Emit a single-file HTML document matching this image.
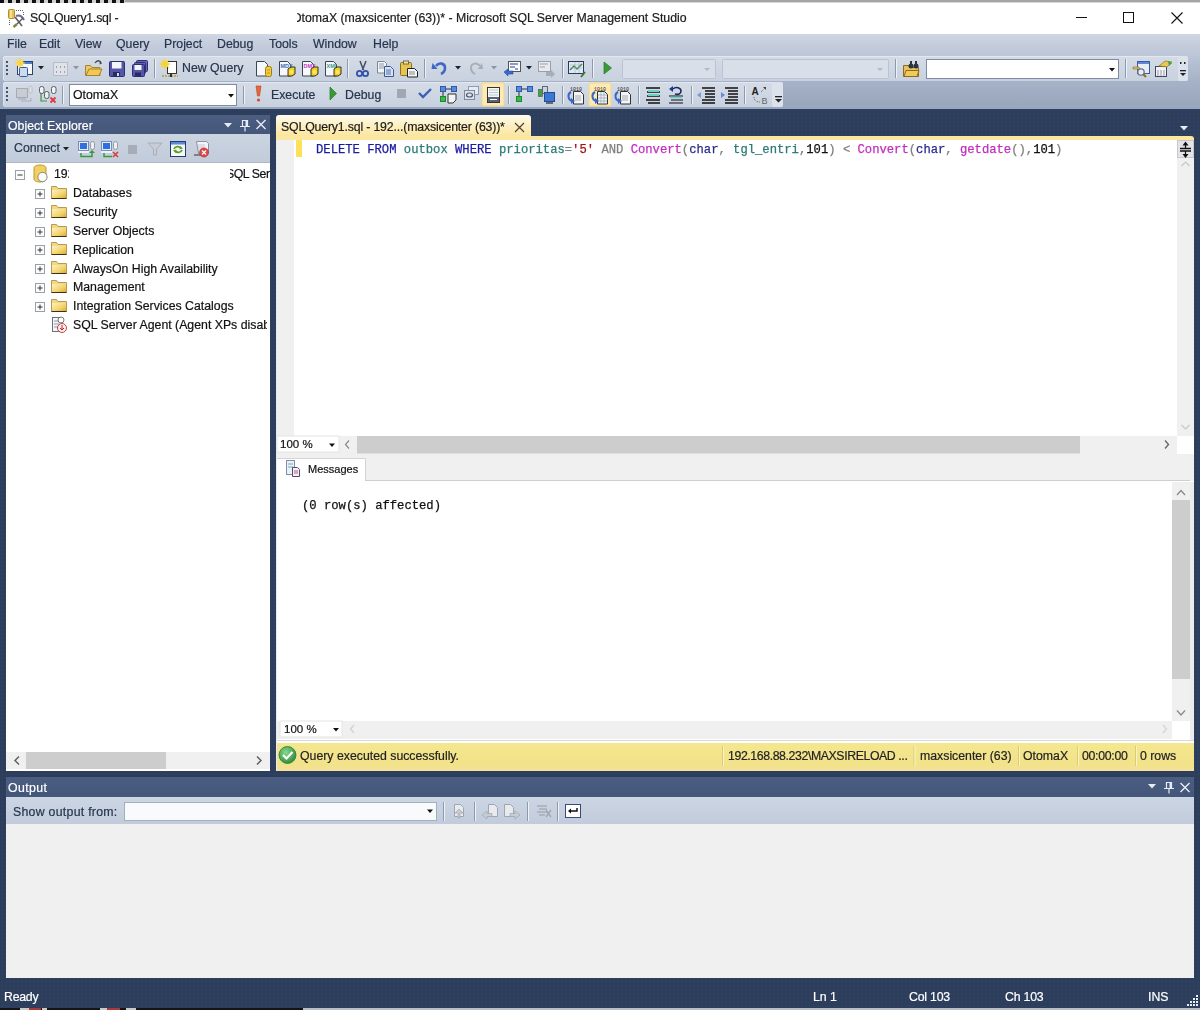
<!DOCTYPE html>
<html><head><meta charset="utf-8">
<style>
*{box-sizing:border-box;margin:0;padding:0}
html,body{width:1200px;height:1010px;overflow:hidden}
body{position:relative;background:#2d3e5c radial-gradient(circle,#31446400 0,#314464 0.6px,transparent 0.9px) 0 0/4px 4px;font-family:"Liberation Sans",sans-serif;font-size:12px;color:#000}
.a{position:absolute;display:block}
.t{position:absolute;white-space:nowrap;line-height:1;-webkit-text-stroke:0.2px;will-change:transform}
.m{font-family:"Liberation Mono",monospace}
</style></head><body>

<div class="a" style="left:0px;top:0px;width:1200px;height:3px;background:linear-gradient(#a4a4a4 0,#a4a4a4 2px,#d8d8d8 2px)"></div>
<div class="a" style="left:0px;top:0px;width:125px;height:3px;background:repeating-linear-gradient(90deg,#111 0,#111 4px,#cfcfcf 4px,#cfcfcf 8px)"></div>
<div class="a" style="left:0px;top:3px;width:1200px;height:31px;background:#fff"></div>
<svg class="a" style="left:4px;top:5px;" width="26" height="26" viewBox="0 0 26 26"><rect x="4.5" y="4.5" width="6" height="9" rx="1" fill="#e8c050" stroke="#a08430" stroke-width="0.9"/><rect x="6" y="5" width="2" height="8" fill="#f8e08a"/><path d="M12 5.5h8M19.5 7v4M5.5 15v6" stroke="#555" stroke-width="0.9" stroke-dasharray="1 1"/><path d="M12 11c3-1 6 0 8 4" stroke="#6a6a90" stroke-width="2" fill="none"/><path d="M11 12l7 9" stroke="#5a5a6a" stroke-width="1.6"/><path d="M19 13l-6 6" stroke="#555" stroke-width="1.2"/><path d="M13 19l-3.5 3" stroke="#7a8a3a" stroke-width="2.4"/></svg>
<div class="t" id="title1" style="left:30px;top:12px;font-size:12.3px;color:#1a1a1a;letter-spacing:-0.22px">SQLQuery1.sql -</div>
<div class="t" id="title2" style="left:291.5px;top:12px;font-size:12.3px;color:#1a1a1a;clip-path:inset(-3px -3px -3px 5.5px)">OtomaX (maxsicenter (63))* - Microsoft SQL Server Management Studio</div>
<div class="a" style="left:1076px;top:17px;width:11px;height:1px;background:#111"></div>
<div class="a" style="left:1123px;top:12px;width:11px;height:11px;border:1px solid #111"></div>
<svg class="a" style="left:1171px;top:12px;" width="12" height="12" viewBox="0 0 12 12"><path d="M0.5 0.5L11.5 11.5M11.5 0.5L0.5 11.5" stroke="#111" stroke-width="1.1"/></svg>
<div class="a" style="left:0px;top:34px;width:1200px;height:22px;background:linear-gradient(#d0d7e4,#c6cedd 40%,#bcc6d7)"></div>
<div class="a" style="left:0px;top:56px;width:1200px;height:53px;background:linear-gradient(#bac5d6,#a4b1c6 50%,#98a6bd)"></div>
<div class="t" style="left:7px;top:38px;font-size:12.3px;color:#26344d">File</div>
<div class="t" style="left:39px;top:38px;font-size:12.3px;color:#26344d">Edit</div>
<div class="t" style="left:75px;top:38px;font-size:12.3px;color:#26344d">View</div>
<div class="t" style="left:116px;top:38px;font-size:12.3px;color:#26344d">Query</div>
<div class="t" style="left:164px;top:38px;font-size:12.3px;color:#26344d">Project</div>
<div class="t" style="left:217px;top:38px;font-size:12.3px;color:#26344d">Debug</div>
<div class="t" style="left:269px;top:38px;font-size:12.3px;color:#26344d">Tools</div>
<div class="t" style="left:313px;top:38px;font-size:12.3px;color:#26344d">Window</div>
<div class="t" style="left:373px;top:38px;font-size:12.3px;color:#26344d">Help</div>
<div class="a" style="left:3px;top:56px;width:1185px;height:25px;background:linear-gradient(#d5dce7,#c8d1df);border-radius:3px;box-shadow:inset 0 1px 0 #e3e8ef,inset 1px 0 0 #dfe5ed"></div>
<div class="a" style="left:3px;top:82px;width:780px;height:25px;background:linear-gradient(#d5dce7,#c8d1df);border-radius:3px;box-shadow:inset 0 1px 0 #e3e8ef,inset 1px 0 0 #dfe5ed"></div>
<div class="a" style="left:6px;top:115px;width:264px;height:19px;background:linear-gradient(#4b5e81,#44567a)"></div>
<div class="t" id="oe" style="left:8px;top:120px;font-size:12.3px;color:#fff">Object Explorer</div>
<div class="a" style="left:6px;top:134px;width:264px;height:28px;background:linear-gradient(#cbd4e1,#c1cbda)"></div>
<div class="t" id="connect" style="left:14px;top:142px;font-size:12.3px;color:#26344d">Connect</div>
<div class="a" style="left:6px;top:162px;width:264px;height:609px;background:#fff;border-top:1px solid #b0b8c4"></div>
<div class="a" style="left:276px;top:115px;width:255px;height:22px;background:linear-gradient(#fffcee 0%,#fdf0c4 45%,#fbe49c 100%);border-radius:3px 3px 0 0"></div>
<div class="t" id="tab" style="left:281px;top:121px;font-size:12.3px;color:#1a1a1a;letter-spacing:-0.16px">SQLQuery1.sql - 192...(maxsicenter (63))*</div>
<div class="a" style="left:276px;top:136px;width:918px;height:4px;background:#fce7a0;border-radius:0 3px 0 0"></div>
<div class="a" style="left:276px;top:140px;width:918px;height:631px;background:#fff;border-left:1px solid #e6ecf4"></div>
<div class="a" style="left:6px;top:777px;width:1188px;height:20px;background:linear-gradient(#4b5e81,#44567a)"></div>
<div class="t" id="output" style="left:8px;top:782px;font-size:12.3px;color:#fff;letter-spacing:0.4px">Output</div>
<div class="a" style="left:6px;top:797px;width:1188px;height:27px;background:linear-gradient(#cdd6e3,#c1cbdb)"></div>
<div class="t" id="showout" style="left:13px;top:806px;font-size:12.3px;color:#26344d;letter-spacing:0.28px">Show output from:</div>
<div class="a" style="left:6px;top:824px;width:1188px;height:154px;background:#f0f0f0"></div>
<div class="t" id="ready" style="left:4px;top:991px;font-size:12.3px;color:#fff;letter-spacing:-0.25px">Ready</div>
<div class="t" id="ln" style="left:813px;top:991px;font-size:12.3px;color:#fff">Ln 1</div>
<div class="t" id="col" style="left:909px;top:991px;font-size:12.3px;color:#fff;letter-spacing:-0.2px">Col 103</div>
<div class="t" id="ch" style="left:1005px;top:991px;font-size:12.3px;color:#fff;letter-spacing:-0.2px">Ch 103</div>
<div class="t" id="ins" style="left:1148px;top:991px;font-size:12.3px;color:#fff">INS</div>
<div class="a" style="left:0px;top:1008px;width:1200px;height:2px;background:#141414"></div>
<div class="a" style="left:303px;top:1008px;width:897px;height:2px;background:#b9bec6"></div>
<div class="a" style="left:20px;top:1008px;width:9px;height:2px;background:#c9c9c9"></div>
<div class="a" style="left:29px;top:1008px;width:12px;height:2px;background:#a83a3a"></div>
<div class="a" style="left:42px;top:1008px;width:5px;height:2px;background:#c9c9c9"></div>
<div class="a" style="left:100px;top:1008px;width:7px;height:2px;background:#c9c9c9"></div>
<div class="a" style="left:107px;top:1008px;width:13px;height:2px;background:#a83a3a"></div>
<div class="a" style="left:126px;top:1008px;width:10px;height:2px;background:#c9c9c9"></div>
<svg class="a" style="left:1187px;top:995px;" width="12" height="12" viewBox="0 0 12 12"><rect x="9" y="0" width="2" height="2" fill="#e8ecf4"/><rect x="6" y="3" width="2" height="2" fill="#e8ecf4"/><rect x="9" y="3" width="2" height="2" fill="#e8ecf4"/><rect x="3" y="6" width="2" height="2" fill="#e8ecf4"/><rect x="6" y="6" width="2" height="2" fill="#e8ecf4"/><rect x="9" y="6" width="2" height="2" fill="#e8ecf4"/><rect x="0" y="9" width="2" height="2" fill="#e8ecf4"/><rect x="3" y="9" width="2" height="2" fill="#e8ecf4"/><rect x="6" y="9" width="2" height="2" fill="#e8ecf4"/><rect x="9" y="9" width="2" height="2" fill="#e8ecf4"/></svg>
<svg class="a" style="left:0px;top:56px;" width="1200" height="52" viewBox="0 0 1200 52"><g transform="translate(0,-56)"><rect x="6" y="61" width="2" height="2" fill="#44536d"/><rect x="6" y="65" width="2" height="2" fill="#44536d"/><rect x="6" y="69" width="2" height="2" fill="#44536d"/><rect x="6" y="73" width="2" height="2" fill="#44536d"/><rect x="17.5" y="61.5" width="15" height="13" fill="#f4f7fc" stroke="#2c4270"/><rect x="18" y="62" width="14" height="2" fill="#4d7fd0"/><circle cx="20" cy="63" r="3.5" fill="#f8e060"/><path d="M20 58v10M15 63h10M16.5 59.5l7 7M23.5 59.5l-7 7" stroke="#f3d23c" stroke-width="1"/><rect x="19.5" y="67.5" width="8" height="9" rx="1" fill="#c9dcf2" stroke="#3a5a90"/><path d="M38 66h6l-3 3.5z" fill="#1b2230"/><rect x="53.5" y="62.5" width="14" height="13" fill="#dfe3e8" stroke="#b8bec8"/><path d="M56 67h1M60 67h1M64 67h1M56 72h1M60 72h1M64 72h1" stroke="#8a8f99" stroke-width="1.5"/><path d="M73 66h6l-3 3.5z" fill="#8d96a6"/><path d="M85.5 65.5h5l1.5 2h8v8h-14.5z" fill="#e9c96a" stroke="#a9822c"/><path d="M86 75.5l3-6.5h13l-3 6.5z" fill="#f2c754" stroke="#a9822c"/><path d="M95 63c2-3 5-3 6 0" stroke="#3c4a5e" stroke-width="1.3" fill="none"/><path d="M100 61l2 2.5-2.5 1z" fill="#3c4a5e"/><rect x="109.5" y="61.5" width="15" height="15" rx="1" fill="#5656a9" stroke="#2e2e78"/><rect x="112" y="62" width="9.5" height="6.5" fill="#f4f4fa"/><rect x="113" y="72" width="7" height="4.5" fill="#2a2a60"/><rect x="117" y="73" width="2" height="3" fill="#d8d8ee"/><rect x="136.5" y="60.5" width="11" height="11" rx="1" fill="#6767b3" stroke="#2e2e78"/><rect x="134.5" y="62.5" width="11" height="11" rx="1" fill="#6060ae" stroke="#2e2e78"/><rect x="132.5" y="64.5" width="12" height="12" rx="1" fill="#5656a9" stroke="#2e2e78"/><rect x="134.5" y="65" width="7" height="5" fill="#f4f4fa"/><rect x="135" y="72.5" width="6" height="3.5" fill="#2a2a60"/><rect x="154" y="59" width="1" height="19" fill="#8c99ae"/><rect x="155" y="59" width="1" height="19" fill="#eef2f7"/><rect x="167.5" y="61.5" width="9" height="12" fill="#fff" stroke="#333"/><circle cx="165" cy="64" r="3.8" fill="#f6d846"/><path d="M165 58.5v11M159.5 64h11M161 60l8 8M169 60l-8 8" stroke="#f1cf3a" stroke-width="0.9"/><path d="M162 76h16" stroke="#b89a30" stroke-width="1.5" stroke-dasharray="2 1"/><rect x="170" y="74" width="2" height="3" fill="#333"/><path d="M256.5 61.5h8l3 3v11.5h-11z" fill="#f7f8fb" stroke="#3c4450"/><rect x="265.5" y="66.5" width="6" height="10" rx="2" fill="#f1cc3e" stroke="#9c7b18"/><path d="M267 70h3M267 73h3" stroke="#c89a18"/><path d="M279.5 61.5h8l3 3v11.5h-11z" fill="#f7f8fb" stroke="#3c4450"/><text x="280.5" y="68" font-family="Liberation Sans" font-size="5.5" font-weight="bold" fill="#3a70b8">MDX</text><path d="M288 69l3-2h4v7l-3 2h-4z" fill="#f4d21c" stroke="#222" stroke-width="0.9"/><circle cx="291.5" cy="72" r="2" fill="#fbe766"/><path d="M302.5 61.5h8l3 3v11.5h-11z" fill="#f7f8fb" stroke="#3c4450"/><text x="303.5" y="68" font-family="Liberation Sans" font-size="5.5" font-weight="bold" fill="#c438c4">DMX</text><path d="M311 69l3-2h4v7l-3 2h-4z" fill="#f4d21c" stroke="#222" stroke-width="0.9"/><circle cx="314.5" cy="72" r="2" fill="#fbe766"/><path d="M325.5 61.5h8l3 3v11.5h-11z" fill="#f7f8fb" stroke="#3c4450"/><text x="326.5" y="68" font-family="Liberation Sans" font-size="5.5" font-weight="bold" fill="#3a9a8a">XML</text><path d="M334 69l3-2h4v7l-3 2h-4z" fill="#f4d21c" stroke="#222" stroke-width="0.9"/><circle cx="337.5" cy="72" r="2" fill="#fbe766"/><rect x="347" y="59" width="1" height="19" fill="#8c99ae"/><rect x="348" y="59" width="1" height="19" fill="#eef2f7"/><path d="M360 61l3.5 9M366 61l-3.5 9" stroke="#444c66" stroke-width="1.5"/><circle cx="359.5" cy="73.5" r="2.6" fill="none" stroke="#3450a8" stroke-width="1.8"/><circle cx="365.5" cy="73.5" r="2.6" fill="none" stroke="#3450a8" stroke-width="1.8"/><path d="M377.5 61.5h7l2 2v9.5h-9z" fill="#f3f4f8" stroke="#7d8799"/><path d="M379 64h5M379 66h5M379 68h5" stroke="#8f99aa"/><path d="M384.5 66.5h6l3 3v7h-9z" fill="#d6e3f5" stroke="#3f5891"/><path d="M386 70h5M386 72h5M386 74h5" stroke="#5470a8"/><rect x="400.5" y="62.5" width="11" height="13" rx="1" fill="#e5c450" stroke="#8e7020"/><rect x="403.5" y="61" width="5" height="3" fill="#e9e3c2" stroke="#7a6a3a"/><path d="M407.5 68.5h7l3 3v5.5h-10z" fill="#f5f6f9" stroke="#222"/><path d="M409 72h6M409 74h6" stroke="#888"/><rect x="424" y="59" width="1" height="19" fill="#8c99ae"/><rect x="425" y="59" width="1" height="19" fill="#eef2f7"/><path d="M436 66c3-4 9-3 9 2c0 3-2 5-4 6" stroke="#3d68c4" stroke-width="2.6" fill="none"/><path d="M432.5 63l5 6h-6z" fill="#3d68c4"/><path d="M455 66h6l-3 3.5z" fill="#1b2230"/><path d="M480 66c-3-4-9-3-9 2c0 3 2 5 4 6" stroke="#a8adb6" stroke-width="2" fill="none"/><path d="M482 63l-4 6h5z" fill="#a8adb6"/><path d="M491 66h6l-3 3.5z" fill="#8d96a6"/><rect x="508.5" y="61.5" width="12" height="10" fill="#fafbfd" stroke="#555"/><path d="M510 64h8M510 67h5M515 69h3" stroke="#2a3a8a" stroke-width="1.2"/><path d="M504 72l4-3v2h5v3h-5v2z" fill="#3a6ad0" stroke="#1e4aa0" stroke-width="0.6"/><path d="M526 66h6l-3 3.5z" fill="#1b2230"/><rect x="538.5" y="61.5" width="12" height="10" fill="#e8eaee" stroke="#9aa0aa"/><path d="M540 64h8M540 67h5" stroke="#9aa0aa"/><path d="M546 72h5v-2l4 4-4 4v-2h-5z" fill="#a8adb6"/><rect x="562" y="59" width="1" height="19" fill="#8c99ae"/><rect x="563" y="59" width="1" height="19" fill="#eef2f7"/><rect x="568.5" y="61.5" width="15" height="12" fill="#dfe8f6" stroke="#2c3a5a"/><path d="M570 70l4-4 3 3 5-5" stroke="#3a8a3a" stroke-width="1.5" fill="none"/><path d="M570 65h12M570 68h12M575 62v11M579 62v11" stroke="#9ab" stroke-width="0.5"/><path d="M581 77l4-5" stroke="#3a7a2a" stroke-width="2"/><rect x="592" y="59" width="1" height="19" fill="#8c99ae"/><rect x="593" y="59" width="1" height="19" fill="#eef2f7"/><path d="M604 62l7.5 6-7.5 6z" fill="#3a9a3a" stroke="#257a25" stroke-width="0.7"/><rect x="622.5" y="59.5" width="93" height="19" rx="1" fill="#d9dfe8" stroke="#b9c3d2"/><path d="M704 68h6l-3 3z" fill="#b0b8c4"/><rect x="722.5" y="59.5" width="166" height="19" rx="1" fill="#d9dfe8" stroke="#b9c3d2"/><path d="M877 68h6l-3 3z" fill="#b0b8c4"/><rect x="895" y="59" width="1" height="19" fill="#8c99ae"/><rect x="896" y="59" width="1" height="19" fill="#eef2f7"/><path d="M903.5 65.5h5l1 2h9v9h-15z" fill="#e6c35a" stroke="#8d6a20"/><path d="M904 76.5l2-6h13l-2 6z" fill="#f0cb58" stroke="#8d6a20"/><circle cx="911" cy="66" r="2.5" fill="#2a3344"/><circle cx="916" cy="66" r="2.5" fill="#2a3344"/><rect x="910" y="61" width="2" height="4" fill="#2a3344"/><rect x="915" y="61" width="2" height="4" fill="#2a3344"/><rect x="926.5" y="59.5" width="192" height="19" fill="#fff" stroke="#7f8da4"/><path d="M1109 68h6l-3 3.5z" fill="#111"/><rect x="1125" y="59" width="1" height="19" fill="#8c99ae"/><rect x="1126" y="59" width="1" height="19" fill="#eef2f7"/><rect x="1137.5" y="61.5" width="12" height="12" fill="#e7eef8" stroke="#3b5aa0"/><rect x="1138" y="62" width="11" height="2" fill="#5a8ad8"/><path d="M1133 67h6l1 2h-7z" fill="#e1c35a" stroke="#8d6a20" stroke-width="0.6"/><circle cx="1141" cy="72" r="3.2" fill="#e8eef6" stroke="#6a7488" stroke-width="1.3"/><path d="M1143 74l3 3" stroke="#8a6a2a" stroke-width="2"/><rect x="1155.5" y="66.5" width="11" height="10" fill="#f1f3f7" stroke="#3d4a60"/><path d="M1158 70v6M1161 70v6M1164 70v6" stroke="#99a"/><path d="M1159 66l6-5 7 1-5 5z" fill="#e6c94e" stroke="#7a6420" stroke-width="0.6"/><path d="M1168 61l4 2-3 3z" fill="#3aa03a"/><rect x="1178" y="56" width="10" height="25" fill="#dbe2ec" rx="2"/><path d="M1180 62h1.5v2h-1.5zM1184 62h1.5v2h-1.5z" fill="#222"/><rect x="1180" y="70" width="6" height="1.3" fill="#222"/><path d="M1180 73h6l-3 3z" fill="#222"/><rect x="6" y="87" width="2" height="2" fill="#44536d"/><rect x="6" y="91" width="2" height="2" fill="#44536d"/><rect x="6" y="95" width="2" height="2" fill="#44536d"/><rect x="6" y="99" width="2" height="2" fill="#44536d"/><rect x="16.5" y="88.5" width="11" height="9" fill="#c9ccd2" stroke="#a6abb4"/><rect x="18" y="98" width="8" height="2" fill="#b8bcc4"/><path d="M21 101h10v-3" stroke="#aab" fill="none"/><rect x="29" y="86" width="3" height="7" rx="1.5" fill="#e0e3e8" stroke="#aab" stroke-width="0.6"/><path d="M41 93v8h6" stroke="#3a9a3a" stroke-width="1.2" fill="none"/><rect x="39.5" y="86.5" width="4.5" height="7" rx="2" fill="#f2f4f7" stroke="#4a4f5a" stroke-width="0.9"/><rect x="44.5" y="91.5" width="4.5" height="7" rx="2" fill="#e8f2ea" stroke="#4a4f5a" stroke-width="0.9"/><rect x="51.5" y="86.5" width="4.5" height="7" rx="2" fill="#f2f4f7" stroke="#4a4f5a" stroke-width="0.9"/><path d="M50.5 97.5l5 5M55.5 97.5l-5 5" stroke="#e03a3a" stroke-width="1.8"/><rect x="62" y="86" width="1" height="18" fill="#8c99ae"/><rect x="63" y="86" width="1" height="18" fill="#eef2f7"/><rect x="69.5" y="84.5" width="167" height="21" fill="#fff" stroke="#7f8da4"/><path d="M228 94h6l-3 3.5z" fill="#111"/><rect x="243" y="86" width="1" height="18" fill="#8c99ae"/><rect x="244" y="86" width="1" height="18" fill="#eef2f7"/><path d="M256 86h5l-1.5 10h-2z" fill="#e8673a" stroke="#b8401a" stroke-width="0.6"/><circle cx="258.5" cy="100" r="1.6" fill="#d84a2a"/><path d="M330 87l6.5 6.5-6.5 6.5z" fill="#3a9a3a" stroke="#257a25" stroke-width="0.7"/><rect x="397" y="89" width="9" height="9" fill="#a2a8b1"/><path d="M419 93l4 4 8-8" stroke="#3d5fb8" stroke-width="2.4" fill="none"/><rect x="440.5" y="86.5" width="5" height="5" fill="#5a8ad8" stroke="#2a5aa8"/><rect x="451.5" y="86.5" width="5" height="5" fill="#5a8ad8" stroke="#2a5aa8"/><path d="M446 89h5M443 92v4" stroke="#333"/><rect x="440.5" y="96.5" width="5" height="5" fill="#3ab84a" stroke="#1a8a2a"/><path d="M448 94h8v6l-3 3h-5z" fill="#f3f4f7" stroke="#333"/><rect x="468.5" y="86.5" width="10" height="8" fill="#e6ecf5" stroke="#8e9ab0"/><rect x="464.5" y="90.5" width="10" height="9" fill="#dde4ee" stroke="#7e8aa0"/><ellipse cx="469.5" cy="95" rx="3" ry="2" fill="none" stroke="#556" stroke-width="1.2"/><rect x="482" y="83" width="22" height="23" fill="#fde9b4" stroke="#f2d58c"/><rect x="487.5" y="87.5" width="12" height="15" fill="#f5f6f8" stroke="#333"/><path d="M489 90h9M489 92.5h9M489 95h9" stroke="#bcc"/><rect x="488" y="97" width="11" height="5" fill="#5a6478"/><path d="M490 99.5h7" stroke="#fff"/><rect x="508" y="86" width="1" height="18" fill="#8c99ae"/><rect x="509" y="86" width="1" height="18" fill="#eef2f7"/><rect x="516.5" y="86.5" width="5" height="5" fill="#5a8ad8" stroke="#2a5aa8"/><rect x="527.5" y="86.5" width="5" height="5" fill="#5a8ad8" stroke="#2a5aa8"/><path d="M522 89h5M519 92v4" stroke="#333"/><rect x="516.5" y="96.5" width="5" height="5" fill="#3ab84a" stroke="#1a8a2a"/><rect x="538.5" y="89.5" width="4" height="7" fill="#4a9a4a" stroke="#2a6a2a" stroke-width="0.6"/><rect x="542.5" y="86.5" width="5" height="7" fill="#c9d3e4" stroke="#667"/><rect x="544.5" y="92.5" width="10" height="9" fill="#3a78d8" stroke="#2a4a90"/><rect x="546" y="102" width="7" height="2" fill="#667"/><rect x="562" y="86" width="1" height="18" fill="#8c99ae"/><rect x="563" y="86" width="1" height="18" fill="#eef2f7"/><text x="570" y="91" font-family="Liberation Mono" font-size="5" fill="#222">1010</text><path d="M573.5 91.5h7l3 3v9.5h-10z" fill="#f3f4f7" stroke="#333"/><path d="M575 96h6M575 98h6M575 100h6" stroke="#999" stroke-width="0.8"/><path d="M571 92c-4 2-3 8 1 9" stroke="#3a68c8" stroke-width="2" fill="none"/><path d="M571 98l4 3-4 3z" fill="#3a68c8"/><rect x="589" y="83" width="22" height="23" fill="#fde9b4" stroke="#f2d58c"/><text x="594" y="91" font-family="Liberation Mono" font-size="5" fill="#222">1010</text><path d="M597.5 91.5h7l3 3v9.5h-10z" fill="#f3f4f7" stroke="#333"/><path d="M598 95h9M598 98h9M598 101h9M601 92v12M604 92v12" stroke="#9ab" stroke-width="0.8"/><path d="M595 92c-4 2-3 8 1 9" stroke="#3a68c8" stroke-width="2" fill="none"/><path d="M595 98l4 3-4 3z" fill="#3a68c8"/><text x="617" y="91" font-family="Liberation Mono" font-size="5" fill="#222">1010</text><path d="M620.5 91.5h7l3 3v9.5h-10z" fill="#f3f4f7" stroke="#333"/><path d="M622 96h6M622 98h6M622 100h6" stroke="#999" stroke-width="0.8"/><path d="M618 92c-4 2-3 8 1 9" stroke="#3a68c8" stroke-width="2" fill="none"/><path d="M618 98l4 3-4 3z" fill="#3a68c8"/><rect x="638" y="86" width="1" height="18" fill="#8c99ae"/><rect x="639" y="86" width="1" height="18" fill="#eef2f7"/><path d="M646 88h14M647 92h13M647 96h13M646 100h14M648 103h12" stroke="#111" stroke-width="1.3"/><path d="M648 91h11M648 95h11" stroke="#6ad0c8" stroke-width="2"/><path d="M673 89c3-3 8-1 8 2s-3 4-6 3" stroke="#1a2a60" stroke-width="1.6" fill="none"/><path d="M669 89l4-3v6z" fill="#1a3a90"/><path d="M669 96h14M671 100h12M669 103h14" stroke="#111" stroke-width="1.2"/><path d="M670 97.5h12" stroke="#6ad0c8" stroke-width="1.5"/><rect x="691" y="86" width="1" height="18" fill="#8c99ae"/><rect x="692" y="86" width="1" height="18" fill="#eef2f7"/><path d="M702 88h13M705 91h10M705 94h10M705 97h10M702 100h13M702 103h13" stroke="#111" stroke-width="1.3"/><path d="M697 95l4-3v6z" fill="#7a9ad8"/><path d="M725 88h13M728 91h10M728 94h10M728 97h10M725 100h13M725 103h13" stroke="#111" stroke-width="1.3"/><path d="M725 95l-4-3v6z" fill="#6a8ad8"/><rect x="744" y="86" width="1" height="18" fill="#8c99ae"/><rect x="745" y="86" width="1" height="18" fill="#eef2f7"/><text x="751.5" y="95" font-family="Liberation Sans" font-size="10" font-weight="bold" fill="#222">A</text><text x="761.5" y="103.5" font-family="Liberation Sans" font-size="9" fill="#666">B</text><path d="M761 92l4-4M754 97c0 3 2 5 6 5" stroke="#555" stroke-width="0.9" stroke-dasharray="1 1" fill="none"/><path d="M763 87h3v3z" fill="#444"/><rect x="772" y="82" width="11" height="25" fill="#dbe2ec" rx="2"/><rect x="775" y="96" width="7" height="1.3" fill="#222"/><path d="M775 99h7l-3.5 3.5z" fill="#222"/></g></svg>
<div class="t" id="newq" style="left:182px;top:62px;font-size:12.3px;color:#26344d">New Query</div>
<div class="t" id="otomax" style="left:73px;top:89px;font-size:12.3px;color:#111">OtomaX</div>
<div class="t" id="exec" style="left:271px;top:89px;font-size:12.3px;color:#26344d">Execute</div>
<div class="t" id="debug" style="left:345px;top:89px;font-size:12.3px;color:#26344d">Debug</div>
<svg class="a" style="left:0px;top:110px;" width="290" height="670" viewBox="0 0 290 670"><g transform="translate(0,-110)"><path d="M224 123h8l-4 4.5z" fill="#e6ecf5"/><path d="M242.5 120.5h5v6h-5z" fill="none" stroke="#e6ecf5" stroke-width="1.2"/><path d="M240 126.5h10M245 126.5v5" stroke="#e6ecf5" stroke-width="1.2"/><rect x="245.5" y="121" width="1.5" height="5" fill="#e6ecf5"/><path d="M256.5 120l9 9M265.5 120l-9 9" stroke="#e6ecf5" stroke-width="1.4"/><path d="M63 147h6l-3 3.5z" fill="#1b2230"/><rect x="78.5" y="141.5" width="10" height="9" fill="#e4ecf8" stroke="#7890b8"/><rect x="80" y="143" width="7" height="6" fill="#2f6fe0"/><rect x="78" y="151" width="11" height="2" fill="#eef"/><rect x="90.5" y="141.5" width="4" height="8" rx="2" fill="#eef0f4" stroke="#888" stroke-width="0.8"/><path d="M81 153v3.5h11v-5" stroke="#3a9a3a" stroke-width="1.5" fill="none"/><path d="M89 153l3-3 3 3z" fill="#3a9a3a"/><rect x="101.5" y="141.5" width="10" height="9" fill="#e4ecf8" stroke="#7890b8"/><rect x="103" y="143" width="7" height="6" fill="#2f6fe0"/><rect x="101" y="151" width="11" height="2" fill="#eef"/><rect x="113.5" y="141.5" width="4" height="8" rx="2" fill="#eef0f4" stroke="#888" stroke-width="0.8"/><path d="M104 153v3.5h8" stroke="#3a9a3a" stroke-width="1.5" fill="none"/><path d="M113 152l5 5M118 152l-5 5" stroke="#e03a3a" stroke-width="1.6"/><rect x="128" y="145" width="9" height="9" fill="#a6adb8"/><path d="M148 143h14l-5.5 6v6h-3v-6z" fill="#c9ced6" stroke="#a0a6b0" stroke-width="0.8"/><rect x="170.5" y="141.5" width="15" height="15" fill="#f4f7fb" stroke="#2a3a6a"/><rect x="171" y="142" width="14" height="2.5" fill="#5a8ad8"/><path d="M174 149c1-3 5-3 7-1M182 150c-1 3-5 3-7 1" stroke="#5aa020" stroke-width="1.8" fill="none"/><path d="M180 146l3 2.5-3.5 1z M176 153l-3-2.5 3.5-1z" fill="#5aa020"/><path d="M196.5 141.5h10l2 2v10h-10z" fill="#f3f4f7" stroke="#8a90a0"/><path d="M194 155h9" stroke="#667" stroke-width="1.5"/><path d="M198 145h7M198 147h7M198 149h5" stroke="#bbc" stroke-width="0.8"/><circle cx="204" cy="152.5" r="4.5" fill="#e04848" stroke="#b02a2a" stroke-width="0.6"/><path d="M202 150.5l4 4M206 150.5l-4 4" stroke="#fff" stroke-width="1.2"/><defs><linearGradient id="fg" x1="0" y1="0" x2="1" y2="1"><stop offset="0" stop-color="#fdf2c2"/><stop offset="0.6" stop-color="#f2d36a"/><stop offset="1" stop-color="#d8a830"/></linearGradient></defs><rect x="15.5" y="170.5" width="9" height="9" fill="#fbfbfb" stroke="#9aa0a8"/><path d="M17.5 175h5" stroke="#333" stroke-width="1"/><path d="M34 168c0-2 3-3 6-3s6 1 6 3v11c0 2-3 3-6 3s-6-1-6-3z" fill="#f0d060" stroke="#b89a30"/><circle cx="42.5" cy="177" r="4.6" fill="#fff" stroke="#888" stroke-width="1"/><rect x="35.5" y="189.5" width="9" height="9" fill="#fbfbfb" stroke="#9aa0a8"/><path d="M37.5 194h5" stroke="#333" stroke-width="1"/><path d="M40 191.5v5" stroke="#333" stroke-width="1"/><path d="M51.5 198.5v-12h5l1.5 2h8.5v10z" fill="#f3d781" stroke="#b69a5a"/><path d="M52 190h14v8.5h-14z" fill="url(#fg)"/><path d="M51.5 198.5h15" stroke="#3a3020" stroke-width="1"/><rect x="35.5" y="208.5" width="9" height="9" fill="#fbfbfb" stroke="#9aa0a8"/><path d="M37.5 213h5" stroke="#333" stroke-width="1"/><path d="M40 210.5v5" stroke="#333" stroke-width="1"/><path d="M51.5 217.5v-12h5l1.5 2h8.5v10z" fill="#f3d781" stroke="#b69a5a"/><path d="M52 209h14v8.5h-14z" fill="url(#fg)"/><path d="M51.5 217.5h15" stroke="#3a3020" stroke-width="1"/><rect x="35.5" y="227.5" width="9" height="9" fill="#fbfbfb" stroke="#9aa0a8"/><path d="M37.5 232h5" stroke="#333" stroke-width="1"/><path d="M40 229.5v5" stroke="#333" stroke-width="1"/><path d="M51.5 236.5v-12h5l1.5 2h8.5v10z" fill="#f3d781" stroke="#b69a5a"/><path d="M52 228h14v8.5h-14z" fill="url(#fg)"/><path d="M51.5 236.5h15" stroke="#3a3020" stroke-width="1"/><rect x="35.5" y="245.5" width="9" height="9" fill="#fbfbfb" stroke="#9aa0a8"/><path d="M37.5 250h5" stroke="#333" stroke-width="1"/><path d="M40 247.5v5" stroke="#333" stroke-width="1"/><path d="M51.5 254.5v-12h5l1.5 2h8.5v10z" fill="#f3d781" stroke="#b69a5a"/><path d="M52 246h14v8.5h-14z" fill="url(#fg)"/><path d="M51.5 254.5h15" stroke="#3a3020" stroke-width="1"/><rect x="35.5" y="264.5" width="9" height="9" fill="#fbfbfb" stroke="#9aa0a8"/><path d="M37.5 269h5" stroke="#333" stroke-width="1"/><path d="M40 266.5v5" stroke="#333" stroke-width="1"/><path d="M51.5 273.5v-12h5l1.5 2h8.5v10z" fill="#f3d781" stroke="#b69a5a"/><path d="M52 265h14v8.5h-14z" fill="url(#fg)"/><path d="M51.5 273.5h15" stroke="#3a3020" stroke-width="1"/><rect x="35.5" y="283.5" width="9" height="9" fill="#fbfbfb" stroke="#9aa0a8"/><path d="M37.5 288h5" stroke="#333" stroke-width="1"/><path d="M40 285.5v5" stroke="#333" stroke-width="1"/><path d="M51.5 292.5v-12h5l1.5 2h8.5v10z" fill="#f3d781" stroke="#b69a5a"/><path d="M52 284h14v8.5h-14z" fill="url(#fg)"/><path d="M51.5 292.5h15" stroke="#3a3020" stroke-width="1"/><rect x="35.5" y="302.5" width="9" height="9" fill="#fbfbfb" stroke="#9aa0a8"/><path d="M37.5 307h5" stroke="#333" stroke-width="1"/><path d="M40 304.5v5" stroke="#333" stroke-width="1"/><path d="M51.5 311.5v-12h5l1.5 2h8.5v10z" fill="#f3d781" stroke="#b69a5a"/><path d="M52 303h14v8.5h-14z" fill="url(#fg)"/><path d="M51.5 311.5h15" stroke="#3a3020" stroke-width="1"/><rect x="52.5" y="317.5" width="9" height="14" fill="#f3f5f8" stroke="#6a7080"/><path d="M54 321h5M54 324h5M54 327h5" stroke="#99a"/><circle cx="61" cy="320" r="3" fill="#fff" stroke="#555" stroke-width="0.8"/><circle cx="62" cy="328" r="4.5" fill="#fdf0f0" stroke="#c04040" stroke-width="1"/><path d="M62 325v5M60 328l2 2 2-2" stroke="#c02020" stroke-width="1" fill="none"/><rect x="6" y="752" width="264" height="17" fill="#f0f0f0"/><rect x="26" y="752" width="140" height="17" fill="#cdcdcd"/><path d="M19 756.5l-4 4 4 4M257 756.5l4 4-4 4" stroke="#606060" stroke-width="1.5" fill="none"/></g></svg>
<div class="t" style="left:54px;top:168px;font-size:12.3px;color:#111;width:15px;overflow:hidden;padding-bottom:4px">192</div>
<div class="a" style="left:70px;top:163px;width:160px;height:19px;background:#fff"></div>
<div class="t" style="left:226px;top:168px;font-size:12.3px;color:#111;letter-spacing:-0.45px;clip-path:inset(0 0 0 4px)">SQL Ser</div>
<div class="t" id="tree0" style="left:73px;top:187px;font-size:12.3px;color:#111;width:194px;overflow:hidden;padding-bottom:4px">Databases</div>
<div class="t" id="tree1" style="left:73px;top:206px;font-size:12.3px;color:#111;width:194px;overflow:hidden;padding-bottom:4px">Security</div>
<div class="t" id="tree2" style="left:73px;top:225px;font-size:12.3px;color:#111;width:194px;overflow:hidden;padding-bottom:4px">Server Objects</div>
<div class="t" id="tree3" style="left:73px;top:244px;font-size:12.3px;color:#111;width:194px;overflow:hidden;padding-bottom:4px">Replication</div>
<div class="t" id="tree4" style="left:73px;top:263px;font-size:12.3px;color:#111;width:194px;overflow:hidden;padding-bottom:4px">AlwaysOn High Availability</div>
<div class="t" id="tree5" style="left:73px;top:281px;font-size:12.3px;color:#111;width:194px;overflow:hidden;padding-bottom:4px">Management</div>
<div class="t" id="tree6" style="left:73px;top:300px;font-size:12.3px;color:#111;width:194px;overflow:hidden;padding-bottom:4px">Integration Services Catalogs</div>
<div class="t" id="tree7" style="left:73px;top:319px;font-size:12.3px;color:#111;width:194px;overflow:hidden;padding-bottom:4px">SQL Server Agent (Agent XPs disabled)</div>
<svg class="a" style="left:270px;top:130px;" width="930" height="650" viewBox="0 0 930 650"><g transform="translate(-270,-130)"><rect x="277" y="140" width="17" height="296" fill="#f0f0f0"/><rect x="296" y="140" width="6" height="17" fill="#fbe25a"/><rect x="1177" y="140" width="17" height="296" fill="#f0f0f0"/><rect x="1177.5" y="140.5" width="16" height="17" fill="#e4e4e8" stroke="#c8c8cc"/><path d="M1180 148.5h11M1180 151h11" stroke="#111" stroke-width="1.3"/><path d="M1185.5 141.5l-3 4h6z M1185.5 158l-3-4h6z" fill="#111"/><path d="M1185.5 144v4M1185.5 151v4" stroke="#111" stroke-width="1.2"/><path d="M1181.5 166l4-4 4 4" stroke="#c8c8c8" stroke-width="1.2" fill="none"/><path d="M1181.5 425l4 4 4-4" stroke="#c8c8c8" stroke-width="1.2" fill="none"/><rect x="277" y="436" width="917" height="18" fill="#f0f0f0"/><rect x="277" y="436" width="62" height="16" fill="#fff" stroke="#e4e4e4"/><path d="M329 443.5h6l-3 3.5z" fill="#111"/><path d="M349 440.5l-3.5 4 3.5 4" stroke="#8a8a8a" stroke-width="1.2" fill="none"/><rect x="357" y="436" width="723" height="17.5" fill="#cdcdcd"/><path d="M1165 440.5l3.5 4-3.5 4" stroke="#6a6a6a" stroke-width="1.4" fill="none"/><rect x="1177" y="436" width="17" height="18" fill="#fff"/><rect x="277" y="454" width="917" height="27" fill="#f0f0f0"/><rect x="277" y="458" width="88" height="24" fill="#fff"/><path d="M277 458.5h88.5v22" stroke="#d4d4d4" fill="none"/><path d="M365 480.5h825" stroke="#cfcfcf"/><rect x="286.5" y="460.5" width="8" height="14" fill="#e8f0fa" stroke="#8090a8"/><path d="M288 464h5M288 467h5" stroke="#7aa"/><path d="M292.5 467.5h5l2 2v7h-7z" fill="#f4f0f4" stroke="#504880"/><path d="M294 471h4M294 473h4" stroke="#c06060"/><rect x="277" y="482" width="913" height="259" fill="#fff"/><rect x="1190" y="482" width="4" height="260" fill="#ececec"/><rect x="1172" y="482" width="18" height="239" fill="#f0f0f0"/><rect x="1172" y="500" width="18" height="179" fill="#cdcdcd"/><path d="M1177 495l4-4.5 4 4.5" stroke="#8a8a8a" stroke-width="1.3" fill="none"/><path d="M1177 710.5l4 4.5 4-4.5" stroke="#8a8a8a" stroke-width="1.3" fill="none"/><rect x="277" y="721" width="895" height="18" fill="#f0f0f0"/><rect x="1172" y="721" width="18" height="18" fill="#fff"/><rect x="280" y="721" width="62" height="16" fill="#fff" stroke="#e4e4e4"/><path d="M333 728h6l-3 3.5z" fill="#111"/><path d="M354 725l-3.5 4 3.5 4" stroke="#d0d0d0" stroke-width="1.2" fill="none"/><path d="M1163 725l3.5 4-3.5 4" stroke="#d4d4d4" stroke-width="1.2" fill="none"/><path d="M277 740.5h917" stroke="#d8d8d8"/><rect x="277" y="741" width="917" height="2" fill="#fff"/><rect x="277" y="743" width="917" height="28" fill="url(#ys)"/><defs><linearGradient id="ys" x1="0" y1="0" x2="0" y2="1"><stop offset="0" stop-color="#f4e78e"/><stop offset="0.8" stop-color="#f2e28a"/><stop offset="1" stop-color="#f6e0a0"/></linearGradient><radialGradient id="gc" cx="0.4" cy="0.35" r="0.7"><stop offset="0" stop-color="#8ad88a"/><stop offset="1" stop-color="#2a8a3a"/></radialGradient></defs><circle cx="287.5" cy="755" r="8.5" fill="url(#gc)" stroke="#2a7a3a" stroke-width="0.8"/><path d="M283 755l3.5 3.5 6-6.5" stroke="#fff" stroke-width="2.2" fill="none"/><rect x="722" y="746" width="1" height="20" fill="#d8cc7a"/><rect x="723" y="746" width="1" height="20" fill="#fbf3c4"/><rect x="913.5" y="746" width="1" height="20" fill="#d8cc7a"/><rect x="914.5" y="746" width="1" height="20" fill="#fbf3c4"/><rect x="1018" y="746" width="1" height="20" fill="#d8cc7a"/><rect x="1019" y="746" width="1" height="20" fill="#fbf3c4"/><rect x="1077" y="746" width="1" height="20" fill="#d8cc7a"/><rect x="1078" y="746" width="1" height="20" fill="#fbf3c4"/><rect x="1135" y="746" width="1" height="20" fill="#d8cc7a"/><rect x="1136" y="746" width="1" height="20" fill="#fbf3c4"/></g></svg>
<div class="t m" id="code" style="left:315.5px;top:143.5px;font-size:12.2px;color:#111;-webkit-text-stroke:0.25px"><span style="color:#1c1ca0">DELETE</span> <span style="color:#1c1ca0">FROM</span> <span style="color:#2a7a76">outbox</span> <span style="color:#1c1ca0">WHERE</span> <span style="color:#2a7a76">prioritas</span><span style="color:#808080">=</span><span style="color:#a31515">'5'</span> <span style="color:#808080">AND</span> <span style="color:#c02ec0">Convert</span><span style="color:#808080">(</span><span style="color:#2a2a90">char</span><span style="color:#808080">,</span> <span style="color:#2a7a76">tgl_entri</span><span style="color:#808080">,</span>101<span style="color:#808080">)</span> <span style="color:#808080">&lt;</span> <span style="color:#c02ec0">Convert</span><span style="color:#808080">(</span><span style="color:#2a2a90">char</span><span style="color:#808080">,</span> <span style="color:#c02ec0">getdate</span><span style="color:#808080">()</span><span style="color:#808080">,</span>101<span style="color:#808080">)</span></div>
<div class="t m" id="msg" style="left:302px;top:500px;font-size:12.2px;color:#111;-webkit-text-stroke:0.25px">(0 row(s) affected)</div>
<div class="t" id="zoom1" style="left:280px;top:439px;font-size:11.5px;color:#111">100 %</div>
<div class="t" id="zoom2" style="left:284px;top:724px;font-size:11.5px;color:#111">100 %</div>
<div class="t" id="messages" style="left:308px;top:464px;font-size:11px;color:#111">Messages</div>
<div class="t" id="qes" style="left:300px;top:750px;font-size:12.3px;color:#222">Query executed successfully.</div>
<div class="t" id="st1" style="left:728px;top:750px;font-size:12.3px;color:#222;letter-spacing:-0.4px">192.168.88.232\MAXSIRELOAD ...</div>
<div class="t" id="st2" style="left:920px;top:750px;font-size:12.3px;color:#222">maxsicenter (63)</div>
<div class="t" id="st3" style="left:1023px;top:750px;font-size:12.3px;color:#222">OtomaX</div>
<div class="t" id="st4" style="left:1082px;top:750px;font-size:12.3px;color:#222;letter-spacing:-0.3px">00:00:00</div>
<div class="t" id="st5" style="left:1140px;top:750px;font-size:12.3px;color:#222">0 rows</div>
<svg class="a" style="left:1178px;top:125px;" width="12" height="8" viewBox="0 0 12 8"><path d="M2 1h8l-4 4.5z" fill="#e6ecf5"/></svg>
<svg class="a" style="left:514px;top:122px;" width="11" height="11" viewBox="0 0 11 11"><path d="M1 1l9 9M10 1l-9 9" stroke="#4d4636" stroke-width="1.2"/></svg>
<svg class="a" style="left:0px;top:775px;" width="1200" height="55" viewBox="0 0 1200 55"><g transform="translate(0,-775)"><path d="M1148 784h8l-4 4.5z" fill="#e6ecf5"/><path d="M1166.5 782.5h5v6h-5z" fill="none" stroke="#e6ecf5" stroke-width="1.2"/><path d="M1164 788.5h10M1169 788.5v5" stroke="#e6ecf5" stroke-width="1.2"/><rect x="1169.5" y="783" width="1.5" height="5" fill="#e6ecf5"/><path d="M1180.5 783l9 9M1189.5 783l-9 9" stroke="#e6ecf5" stroke-width="1.4"/><rect x="124.5" y="802.5" width="312" height="18" fill="#f9fafc" stroke="#a3afc0"/><path d="M427 809.5h6l-3 3.5z" fill="#111"/><rect x="443" y="802" width="1" height="19" fill="#8c99ae"/><rect x="444" y="802" width="1" height="19" fill="#eef2f7"/><path d="M454.5 804.5h6l3 3v9h-9z" fill="#e8eaee" stroke="#a0a6b0"/><path d="M458 818v-5h-3l4-4 4 4h-3v5z" fill="#c8ccd4" stroke="#9aa0aa" stroke-width="0.6"/><rect x="474" y="802" width="1" height="19" fill="#8c99ae"/><rect x="475" y="802" width="1" height="19" fill="#eef2f7"/><path d="M488.5 804.5h6l3 3v9h-9z" fill="#e8eaee" stroke="#a0a6b0"/><path d="M482 815l5-4v2.5h5v3h-5v2.5z" fill="#c8ccd4" stroke="#9aa0aa" stroke-width="0.6"/><path d="M504.5 804.5h6l3 3v9h-9z" fill="#e8eaee" stroke="#a0a6b0"/><path d="M520 815l-5-4v2.5h-5v3h5v2.5z" fill="#c8ccd4" stroke="#9aa0aa" stroke-width="0.6"/><rect x="527" y="802" width="1" height="19" fill="#8c99ae"/><rect x="528" y="802" width="1" height="19" fill="#eef2f7"/><path d="M537 806h10M539 809h8M537 812h10M539 815h6" stroke="#a8aeb8" stroke-width="1.3"/><path d="M546 810l5 7M551 810l-5 7" stroke="#a0a6b0" stroke-width="1.3"/><rect x="557" y="802" width="1" height="19" fill="#8c99ae"/><rect x="558" y="802" width="1" height="19" fill="#eef2f7"/><rect x="565.5" y="804.5" width="15" height="13" fill="#fff" stroke="#3a4a78"/><path d="M569 811h8v-3" stroke="#111" stroke-width="1.5" fill="none"/><path d="M568 811l3-2.5v5z" fill="#111"/></g></svg>
</body></html>
